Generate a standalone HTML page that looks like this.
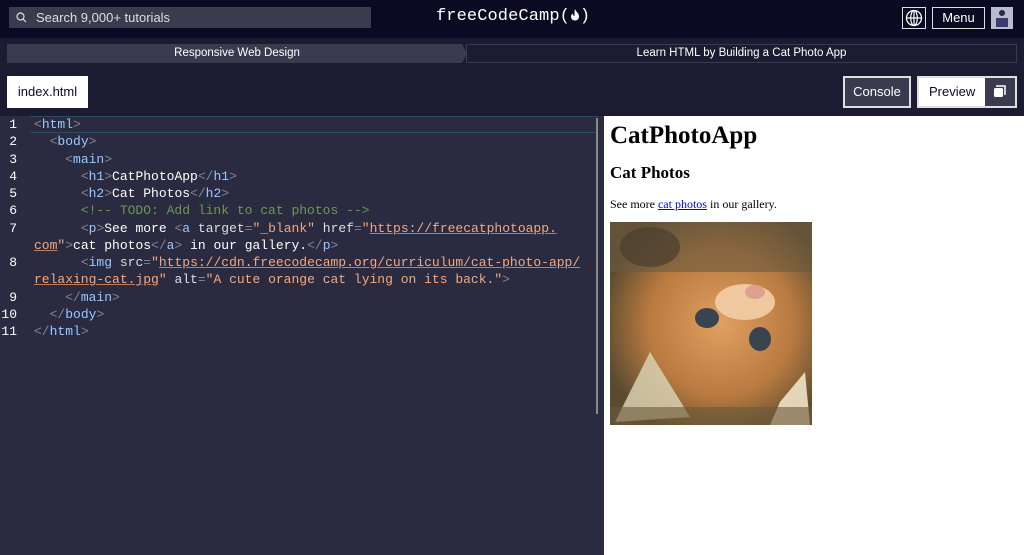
<!DOCTYPE html>
<html><head><meta charset="utf-8"><style>
*{box-sizing:border-box;margin:0;padding:0}
body{width:1024px;height:555px;overflow:hidden;background:#1b1b32;font-family:"Liberation Sans",sans-serif;position:relative}
.nav{position:absolute;left:0;top:0;width:1024px;height:38px;background:#0a0a23}
.search{position:absolute;left:9px;top:7px;width:362px;height:21px;background:#3b3b4f;color:#dfdfe2;font-size:13px;line-height:21px;padding-left:27px}
.logo{position:absolute;left:436px;top:7px;color:#fff;font-family:"Liberation Mono",monospace;font-size:17px;letter-spacing:0.1px}
.btn{position:absolute;border:1px solid #dfdfe2;color:#fff}
.crumb{position:absolute;top:44px;height:19px;font-size:11.5px;color:#fff;line-height:19px;text-align:center}
.code{position:absolute;left:0;top:116px;width:598px;height:439px;background:#2a2a40;font-family:"Liberation Mono","DejaVu Sans Mono",monospace;font-size:13px}
.ln{position:absolute;left:0;width:17px;text-align:right;color:#fff;line-height:17px}
.l{position:absolute;left:34px;white-space:pre;color:#fff;line-height:17px}
.t{color:#99c9ff}.b{color:#858591}.a{color:#dfdfe2}.s{color:#f5a97f}.c{color:#6a9955}.u{text-decoration:underline;text-decoration-color:#c07d5e}
.pv{position:absolute;left:604px;top:116px;width:420px;height:439px;background:#fff;font-family:"Liberation Serif",serif;color:#000}
</style></head><body>
<div class="nav">
 <div class="search"><svg style="position:absolute;left:7px;top:5px" width="11" height="11" viewBox="0 0 11 11"><circle cx="4.5" cy="4.5" r="3.5" fill="none" stroke="#dfdfe2" stroke-width="1.2"/><path d="M7 7L10 10" stroke="#dfdfe2" stroke-width="1.2"/></svg>Search 9,000+ tutorials</div>
 <div class="logo">freeCodeCamp(<svg width="10" height="13" viewBox="0 0 10 13" style="vertical-align:-1px"><path d="M5 1C6 4 9 5 9 8.5C9 11 7 12.5 5 12.5C3 12.5 1 11 1 8.5C1 7 2 6 3 5.5C3 7 3.5 8 4.5 8C5 6 4 4 5 1Z" fill="#fff"/></svg>)</div>
 <div class="btn" style="left:902px;top:7px;width:24px;height:22px"><svg width="22" height="20" viewBox="0 0 22 20"><circle cx="11" cy="10" r="7.5" fill="none" stroke="#fff" stroke-width="1.3"/><ellipse cx="11" cy="10" rx="3.3" ry="7.5" fill="none" stroke="#fff" stroke-width="1.2"/><path d="M3.5 10H18.5M11 2.5V17.5" stroke="#fff" stroke-width="1.2"/></svg></div>
 <div class="btn" style="left:932px;top:7px;width:53px;height:22px;font-size:13px;text-align:center;line-height:20px">Menu</div>
 <div style="position:absolute;left:991px;top:7px;width:22px;height:22px;background:#b8bcd0"><div style="position:absolute;left:5px;top:11px;width:12px;height:9px;background:#3b3b6f"></div><div style="position:absolute;left:8px;top:3px;width:6px;height:6px;border-radius:3px;background:#2a2a40"></div></div>
</div>
<div class="crumb" style="left:7px;width:460px;background:#3b3b4f;clip-path:polygon(0 0,455px 0,460px 50%,455px 100%,0 100%)">Responsive Web Design</div>
<div class="crumb" style="left:466px;width:551px;border:1px solid #3b3b4f;line-height:17px">Learn HTML by Building a Cat Photo App</div>
<div style="position:absolute;left:7px;top:76px;width:81px;height:32px;background:#fff;color:#0a0a23;font-size:13px;line-height:32px;text-align:center">index.html</div>
<div style="position:absolute;left:843px;top:76px;width:68px;height:32px;background:#3b3b4f;border:2px solid #dfdfe2;color:#fff;font-size:13px;line-height:28px;text-align:center">Console</div>
<div style="position:absolute;left:917px;top:76px;width:100px;height:32px;background:#fff;border:2px solid #dfdfe2;color:#0a0a23;font-size:13px;line-height:28px;padding-left:10px">Preview</div>
<div style="position:absolute;left:985px;top:78px;width:30px;height:28px;background:#3b3b4f"><svg width="30" height="28" viewBox="0 0 30 28"><rect x="9" y="10" width="9" height="9" rx="1.5" fill="#fff"/><path d="M12 9V8h8v8h-1" stroke="#fff" stroke-width="1.5" fill="none"/></svg></div>
<div class="code">
 <div style="position:absolute;left:30px;top:0;width:568px;height:17px;border-top:1px solid #2e4a6b;border-bottom:1px solid #2e4a6b"></div>
 <div style="position:absolute;left:596px;top:2px;width:2px;height:296px;background:#888"></div>
 <div class="ln" style="top:0">1</div><div class="ln" style="top:17.25px">2</div><div class="ln" style="top:34.5px">3</div><div class="ln" style="top:51.75px">4</div><div class="ln" style="top:69px">5</div><div class="ln" style="top:86.25px">6</div><div class="ln" style="top:103.5px">7</div><div class="ln" style="top:138px">8</div><div class="ln" style="top:172.5px">9</div><div class="ln" style="top:189.75px">10</div><div class="ln" style="top:207px">11</div>
 <div class="l" style="top:0"><span class="b">&lt;</span><span class="t">html</span><span class="b">&gt;</span></div>
 <div class="l" style="top:17.25px">  <span class="b">&lt;</span><span class="t">body</span><span class="b">&gt;</span></div>
 <div class="l" style="top:34.5px">    <span class="b">&lt;</span><span class="t">main</span><span class="b">&gt;</span></div>
 <div class="l" style="top:51.75px">      <span class="b">&lt;</span><span class="t">h1</span><span class="b">&gt;</span>CatPhotoApp<span class="b">&lt;/</span><span class="t">h1</span><span class="b">&gt;</span></div>
 <div class="l" style="top:69px">      <span class="b">&lt;</span><span class="t">h2</span><span class="b">&gt;</span>Cat Photos<span class="b">&lt;/</span><span class="t">h2</span><span class="b">&gt;</span></div>
 <div class="l c" style="top:86.25px">      &lt;!-- TODO: Add link to cat photos --&gt;</div>
 <div class="l" style="top:103.5px">      <span class="b">&lt;</span><span class="t">p</span><span class="b">&gt;</span>See more <span class="b">&lt;</span><span class="t">a</span> <span class="a">target</span><span class="b">=</span><span class="s">"_blank"</span> <span class="a">href</span><span class="b">=</span><span class="s">"<span class="u">https://freecatphotoapp.</span></span></div>
 <div class="l" style="top:120.75px"><span class="s"><span class="u">com</span>"</span><span class="b">&gt;</span>cat photos<span class="b">&lt;/</span><span class="t">a</span><span class="b">&gt;</span> in our gallery.<span class="b">&lt;/</span><span class="t">p</span><span class="b">&gt;</span></div>
 <div class="l" style="top:138px">      <span class="b">&lt;</span><span class="t">img</span> <span class="a">src</span><span class="b">=</span><span class="s">"<span class="u">https://cdn.freecodecamp.org/curriculum/cat-photo-app/</span></span></div>
 <div class="l" style="top:155.25px"><span class="s"><span class="u">relaxing-cat.jpg</span>"</span> <span class="a">alt</span><span class="b">=</span><span class="s">"A cute orange cat lying on its back."</span><span class="b">&gt;</span></div>
 <div class="l" style="top:172.5px">    <span class="b">&lt;/</span><span class="t">main</span><span class="b">&gt;</span></div>
 <div class="l" style="top:189.75px">  <span class="b">&lt;/</span><span class="t">body</span><span class="b">&gt;</span></div>
 <div class="l" style="top:207px"><span class="b">&lt;/</span><span class="t">html</span><span class="b">&gt;</span></div>
</div>
<div style="position:absolute;left:598px;top:116px;width:6px;height:439px;background:#2a2a40"></div>
<div class="pv">
 <div style="position:absolute;left:6px;top:6px;font-size:25px;font-weight:bold">CatPhotoApp</div>
 <div style="position:absolute;left:6px;top:47px;font-size:17px;font-weight:bold">Cat Photos</div>
 <div style="position:absolute;left:6px;top:81px;font-size:12px">See more <span style="color:#00e;text-decoration:underline">cat photos</span> in our gallery.</div>
 <svg style="position:absolute;left:6px;top:106px" width="202" height="203" viewBox="0 0 202 203">
  <defs><radialGradient id="g" cx="0.55" cy="0.5" r="0.6"><stop offset="0" stop-color="#e0a060"/><stop offset="0.6" stop-color="#b87a40"/><stop offset="1" stop-color="#5a4a30"/></radialGradient></defs>
  <rect width="202" height="203" fill="url(#g)"/>
  <rect width="202" height="50" fill="#6a5a40" opacity="0.6"/>
  <ellipse cx="40" cy="25" rx="30" ry="20" fill="#4a3e2e" opacity="0.7"/>
  <ellipse cx="135" cy="80" rx="30" ry="18" fill="#f0c8a0"/>
  <ellipse cx="145" cy="70" rx="10" ry="7" fill="#e0a090"/>
  <ellipse cx="97" cy="96" rx="12" ry="10" fill="#3a4450"/>
  <ellipse cx="150" cy="117" rx="11" ry="12" fill="#3a4450"/>
  <path d="M5 200L40 130L80 195Z" fill="#d8d0b0" opacity="0.85"/>
  <path d="M170 180L195 150L200 203L160 203Z" fill="#efe2c8" opacity="0.9"/>
  <rect y="185" width="202" height="18" fill="#6a5838" opacity="0.6"/>
 </svg>
</div>
</body></html>
